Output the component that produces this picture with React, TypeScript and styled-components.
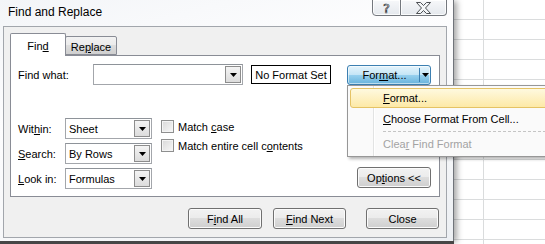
import React from 'react'
import styled, { createGlobalStyle } from 'styled-components'

const GlobalStyle = createGlobalStyle`
  html, body {
    margin: 0;
    padding: 0;
  }
  body {
    font-family: 'Liberation Sans', Arial, sans-serif;
    font-size: 11px;
    color: #000;
  }
`

const Desktop = styled.div`
  width: 545px;
  height: 244px;
  overflow: hidden;
  display: flex;
  align-items: flex-start;
  background-color: #fff;
  background-image: linear-gradient(to bottom, transparent 19px, #dadcdd 19px, #dadcdd 20px, transparent 20px),
    linear-gradient(to right, transparent 35px, #dadcdd 35px, #dadcdd 36px, transparent 36px);
  background-size: 100% 20px, 64px 100%;
`

const Window = styled.div`
  position: relative;
  flex: none;
  width: 454px;
  height: 241px;
  box-sizing: border-box;
  display: flex;
  flex-direction: column;
  background: linear-gradient(165deg, #f3f5f8 0%, #fdfdfe 35%, #f6f7f9 70%, #eceff3 100%);
  border-right: 1px solid #70747a;
  box-shadow: 0 3px 0 #464646, 3px 1px 6px rgba(0, 0, 0, 0.35);
`

const TitleBar = styled.div`
  height: 26px;
  display: flex;
  align-items: flex-start;
  padding-left: 8px;
`

const Title = styled.div`
  padding-top: 5px;
  font-size: 12px;
  line-height: 14px;
`

const Captions = styled.div`
  display: flex;
  margin-left: auto;
  margin-right: 6px;
  margin-top: -1px;
`

const CaptionButton = styled.div<{ $wide?: boolean }>`
  width: ${({ $wide }) => ($wide ? 46 : 29)}px;
  height: 17px;
  box-sizing: border-box;
  display: flex;
  align-items: center;
  justify-content: center;
  border: 1px solid #74787e;
  border-left-width: ${({ $wide }) => ($wide ? 0 : 1)}px;
  border-radius: ${({ $wide }) => ($wide ? '0 0 4px 0' : '0 0 0 4px')};
  background: linear-gradient(#f7f8fa, #e4e8ed);
  box-shadow: inset 0 0 0 1px rgba(255, 255, 255, 0.8);
`

const HelpGlyph = styled.span`
  font-family: 'DejaVu Sans', sans-serif;
  font-size: 13px;
  line-height: 13px;
  color: #f4f6f8;
  -webkit-text-stroke: 0.7px #3a3d42;
  padding-top: 1px;
`

const Client = styled.div`
  flex: 1;
  margin: 0 6px 3px 3px;
  padding: 6px 6px 0 6px;
  background: #f0f0f0;
  border: 1px solid #a2a6ac;
  display: flex;
  flex-direction: column;
`

const TabStrip = styled.div`
  display: flex;
  align-items: flex-end;
  height: 22px;
  position: relative;
  z-index: 1;
`

const Tab = styled.div<{ $active?: boolean }>`
  box-sizing: border-box;
  display: flex;
  justify-content: center;
  width: ${({ $active }) => ($active ? 56 : 52)}px;
  height: ${({ $active }) => ($active ? 23 : 19)}px;
  margin-bottom: ${({ $active }) => ($active ? -1 : 0)}px;
  margin-left: ${({ $active }) => ($active ? 0 : -1)}px;
  padding-top: ${({ $active }) => ($active ? 6 : 4)}px;
  border: 1px solid #898c95;
  border-bottom: ${({ $active }) => ($active ? 'none' : '1px solid #898c95')};
  border-radius: 2px 2px 0 0;
  background: ${({ $active }) =>
    $active ? '#fff' : 'linear-gradient(#f2f2f2 0%, #ebebeb 50%, #dddddd 50%, #cfcfcf 100%)'};
`

const Panel = styled.div`
  height: 142px;
  box-sizing: border-box;
  padding: 8px 8px 7px 7px;
  background: #fff;
  border: 1px solid #898c95;
  display: flex;
  flex-direction: column;
  justify-content: space-between;
`

const FindRow = styled.div`
  display: flex;
  align-items: center;
  height: 21px;
`

const Label = styled.div<{ $width: number }>`
  width: ${({ $width }) => $width}px;
  flex: none;
`

const Combo = styled.div<{ $width: number }>`
  width: ${({ $width }) => $width}px;
  height: 21px;
  box-sizing: border-box;
  display: flex;
  align-items: stretch;
  border: 1px solid #a3a6ab;
  border-top-color: #8e9399;
  background: #fff;
`

const ComboText = styled.div`
  flex: 1;
  display: flex;
  align-items: center;
  padding-left: 3px;
`

const DropButton = styled.div`
  width: 16px;
  margin: 1px;
  box-sizing: border-box;
  display: flex;
  align-items: center;
  justify-content: center;
  border: 1px solid #8d8d8d;
  background: linear-gradient(#f4f4f4, #dcdcdc);
`

const FormatBox = styled.div`
  margin-left: 8px;
  width: 80px;
  height: 19px;
  box-sizing: border-box;
  border: 1px solid #000;
  display: flex;
  align-items: center;
  justify-content: center;
`

const MenuAnchor = styled.div`
  position: relative;
  margin-left: 16px;
`

const Button = styled.div<{ $width: number }>`
  width: ${({ $width }) => $width}px;
  height: 21px;
  box-sizing: border-box;
  display: flex;
  align-items: center;
  justify-content: center;
  border: 1px solid #707070;
  border-radius: 3px;
  background: linear-gradient(#f2f2f2 0%, #ebebeb 50%, #dddddd 50%, #cfcfcf 100%);
  box-shadow: inset 0 0 0 1px #fbfbfb;
`

const SplitButton = styled.div`
  width: 84px;
  height: 20px;
  box-sizing: border-box;
  display: flex;
  border: 1px solid #3c7fb1;
  border-radius: 3px;
  background: linear-gradient(#e5f4fc 0%, #c4e5f6 50%, #98d1ef 50%, #68b3db 100%);
  box-shadow: inset 0 0 0 1px rgba(255, 255, 255, 0.55);
`

const SplitMain = styled.div`
  flex: 1;
  display: flex;
  align-items: center;
  justify-content: center;
  padding-left: 2px;
`

const SplitArrow = styled.div`
  width: 10px;
  display: flex;
  align-items: center;
  justify-content: center;
  border-left: 1px solid #3c7fb1;
  margin: 2px 0;
`

const Menu = styled.div`
  position: absolute;
  top: 100%;
  left: 0;
  width: 215px;
  box-sizing: border-box;
  padding: 1px 0 1px 1px;
  background: #fafafa;
  border: 1px solid #979797;
  box-shadow: 2px 2px 3px rgba(0, 0, 0, 0.3);
  z-index: 5;

  &::before {
    content: '';
    position: absolute;
    top: 0;
    bottom: 0;
    left: 25px;
    width: 1px;
    background: #e2e3e3;
    box-shadow: 1px 0 0 #fff;
  }
`

const MenuItem = styled.div<{ $hot?: boolean; $disabled?: boolean }>`
  position: relative;
  height: 20px;
  margin: 1px 0 1px 1px;
  box-sizing: border-box;
  display: flex;
  align-items: center;
  padding-left: 32px;
  color: ${({ $disabled }) => ($disabled ? '#a3a3a3' : '#000')};
  border: 1px solid ${({ $hot }) => ($hot ? '#e5c365' : 'transparent')};
  border-radius: 3px;
  background: ${({ $hot }) => ($hot ? 'linear-gradient(#fef9df, #fde9a7)' : 'transparent')};
  z-index: 1;
`

const MenuSeparator = styled.div`
  height: 3px;
  margin-left: 34px;
  display: flex;
  align-items: center;

  &::after {
    content: '';
    flex: 1;
    border-top: 1px dashed #c5c5c5;
  }
`

const LowerRow = styled.div`
  display: flex;
  align-items: flex-end;
`

const OptionGrid = styled.div`
  display: grid;
  grid-template-columns: 47px 87px;
  grid-auto-rows: 21px;
  row-gap: 4px;
  align-items: center;
`

const Checks = styled.div`
  align-self: flex-start;
  margin-left: 9px;
  padding-top: 2px;
  display: flex;
  flex-direction: column;
  gap: 6px;
`

const CheckRow = styled.div`
  display: flex;
  align-items: center;
  gap: 4px;
  height: 13px;
`

const CheckBox = styled.div`
  width: 13px;
  height: 13px;
  box-sizing: border-box;
  border: 1px solid #8e8f8f;
  background: linear-gradient(135deg, #d8d8d8, #f8f8f8);
  box-shadow: inset 0 0 0 1px #f4f4f4;
`

const OptionsSlot = styled.div`
  margin-left: auto;
  margin-bottom: 1px;
`

const Footer = styled.div`
  display: flex;
  justify-content: flex-end;
  margin-top: 11px;
  padding-right: 1px;
  gap: 11px;
`

const CloseSlot = styled.div`
  margin-left: 9px;
`

const Accel = styled.u`
  text-decoration: underline;
  text-underline-offset: 1px;
`

const DownArrow = () => (
  <svg width="7" height="4" viewBox="0 0 7 4">
    <path d="M0 0h7L3.5 4z" fill="#000" />
  </svg>
)

const CloseGlyph = () => (
  <svg width="15" height="12" viewBox="0 0 15 12">
    <path
      d="M0.5 0.5h4l3 3 3-3h4l-5 5.5 5 5.5h-4l-3-3-3 3h-4l5-5.5z"
      fill="#f4f6f8"
      stroke="#3a3d42"
      strokeWidth="0.9"
    />
  </svg>
)

type SelectProps = { label: React.ReactNode; value: string }

const SelectField = ({ label, value }: SelectProps) => (
  <>
    <Label $width={47}>{label}</Label>
    <Combo $width={87}>
      <ComboText>{value}</ComboText>
      <DropButton>
        <DownArrow />
      </DropButton>
    </Combo>
  </>
)

export default function App() {
  return (
    <Desktop>
      <GlobalStyle />
      <Window>
        <TitleBar>
          <Title>Find and Replace</Title>
          <Captions>
            <CaptionButton>
              <HelpGlyph>?</HelpGlyph>
            </CaptionButton>
            <CaptionButton $wide>
              <CloseGlyph />
            </CaptionButton>
          </Captions>
        </TitleBar>
        <Client>
          <TabStrip>
            <Tab $active>
              Fin<Accel>d</Accel>
            </Tab>
            <Tab>
              Re<Accel>p</Accel>lace
            </Tab>
          </TabStrip>
          <Panel>
            <FindRow>
              <Label $width={75}>Find what:</Label>
              <Combo $width={150}>
                <ComboText />
                <DropButton>
                  <DownArrow />
                </DropButton>
              </Combo>
              <FormatBox>No Format Set</FormatBox>
              <MenuAnchor>
                <SplitButton>
                  <SplitMain>
                    For<Accel>m</Accel>at...
                  </SplitMain>
                  <SplitArrow>
                    <DownArrow />
                  </SplitArrow>
                </SplitButton>
                <Menu>
                  <MenuItem $hot>
                    <span>
                      <Accel>F</Accel>ormat...
                    </span>
                  </MenuItem>
                  <MenuItem>
                    <span>
                      <Accel>C</Accel>hoose Format From Cell...
                    </span>
                  </MenuItem>
                  <MenuSeparator />
                  <MenuItem $disabled>
                    <span>
                      Clea<Accel>r</Accel> Find Format
                    </span>
                  </MenuItem>
                </Menu>
              </MenuAnchor>
            </FindRow>
            <LowerRow>
              <OptionGrid>
                <SelectField
                  label={
                    <>
                      Wit<Accel>h</Accel>in:
                    </>
                  }
                  value="Sheet"
                />
                <SelectField
                  label={
                    <>
                      <Accel>S</Accel>earch:
                    </>
                  }
                  value="By Rows"
                />
                <SelectField
                  label={
                    <>
                      <Accel>L</Accel>ook in:
                    </>
                  }
                  value="Formulas"
                />
              </OptionGrid>
              <Checks>
                <CheckRow>
                  <CheckBox />
                  <span>
                    Match <Accel>c</Accel>ase
                  </span>
                </CheckRow>
                <CheckRow>
                  <CheckBox />
                  <span>
                    Match entire cell c<Accel>o</Accel>ntents
                  </span>
                </CheckRow>
              </Checks>
              <OptionsSlot>
                <Button $width={74}>
                  Op<Accel>t</Accel>ions &lt;&lt;
                </Button>
              </OptionsSlot>
            </LowerRow>
          </Panel>
          <Footer>
            <Button $width={74}>
              F<Accel>i</Accel>nd All
            </Button>
            <Button $width={73}>
              <Accel>F</Accel>ind Next
            </Button>
            <CloseSlot>
              <Button $width={73}>Close</Button>
            </CloseSlot>
          </Footer>
        </Client>
      </Window>
    </Desktop>
  )
}
